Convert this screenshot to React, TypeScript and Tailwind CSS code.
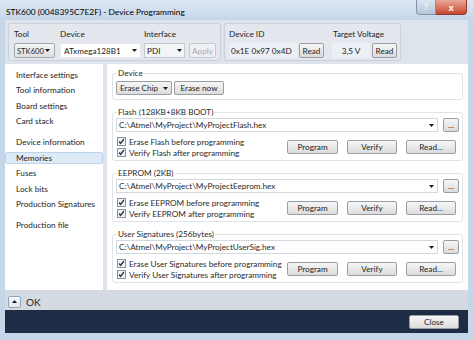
import React from 'react';

const navItems: { label: string; gap?: boolean; selected?: boolean }[] = [
  { label: 'Interface settings' },
  { label: 'Tool information' },
  { label: 'Board settings' },
  { label: 'Card stack' },
  { label: 'Device information', gap: true },
  { label: 'Memories', selected: true },
  { label: 'Fuses' },
  { label: 'Lock bits' },
  { label: 'Production Signatures' },
  { label: 'Production file', gap: true },
];

const memories = [
  {
    legend: 'Flash (128KB+8KB BOOT)',
    path: 'C:\\Atmel\\MyProject\\MyProjectFlash.hex',
    erase: 'Erase Flash before programming',
    verify: 'Verify Flash after programming',
  },
  {
    legend: 'EEPROM (2KB)',
    path: 'C:\\Atmel\\MyProject\\MyProjectEeprom.hex',
    erase: 'Erase EEPROM before programming',
    verify: 'Verify EEPROM after programming',
  },
  {
    legend: 'User Signatures (256bytes)',
    path: 'C:\\Atmel\\MyProject\\MyProjectUserSig.hex',
    erase: 'Erase User Signatures before programming',
    verify: 'Verify User Signatures after programming',
  },
];

function Arrow() {
  return (
    <svg width="5" height="3" viewBox="0 0 5 3" className="shrink-0">
      <path d="M0 0h5L2.5 3z" fill="#1a1a1a" />
    </svg>
  );
}

function Button({ label, className = '' }: { label: string; className?: string }) {
  return (
    <div
      className={`flex items-center justify-center rounded-[2px] border border-[#9a9ea4] bg-gradient-to-b from-[#f6f6f6] to-[#dcdcdc] text-[#1e1e1e] ${className}`}
    >
      {label}
    </div>
  );
}

function Checkbox({ label }: { label: string }) {
  return (
    <div className="flex h-[11px] items-center gap-[3px]">
      <svg width="9" height="9" viewBox="0 0 9 9" className="shrink-0">
        <rect x="0.5" y="0.5" width="8" height="8" fill="#f1f3f6" stroke="#8c939c" />
        <path d="M2 4.5l1.6 1.8L7 2" stroke="#2c3a5c" strokeWidth="1.4" fill="none" />
      </svg>
      <span>{label}</span>
    </div>
  );
}

export default function App() {
  return (
    <div className="flex h-[340px] w-[474px] flex-col whitespace-nowrap bg-[#c6d6e9] font-[Lato,sans-serif] text-[8.2px] leading-[10px] text-[#1e1e1e]">
      {/* Title bar */}
      <div className="flex h-[20px] shrink-0 items-start justify-between bg-gradient-to-b from-[#dbe7f4] to-[#c6d6e9] pr-[7px]">
        <div className="pl-[6px] pt-[7px] text-[8.4px] text-black">
          STK600 (0048395C7E2F) - Device Programming
        </div>
        <div className="flex">
          <div className="flex h-[15px] w-[20px] items-center justify-center rounded-bl-[4px] border border-t-0 border-[#8093ab] bg-gradient-to-b from-[#dbe5f0] to-[#b6c7db] text-[9px] font-bold text-[#f4f7fb]">
            ?
          </div>
          <div className="flex h-[15px] w-[31px] items-center justify-center rounded-br-[4px] border border-l-0 border-t-0 border-[#8c3b2e] bg-gradient-to-b from-[#e9a899] to-[#c4432e] text-[10px] font-bold text-white">
            x
          </div>
        </div>
      </div>

      {/* Client */}
      <div className="ml-[5px] mr-[6px] flex flex-1 flex-col bg-[#dee4eb]">
        {/* Toolbar */}
        <div className="flex h-[44px] shrink-0 gap-[3px] pl-[3px] pt-[3px]">
          <div className="flex h-[38px] w-[213px] gap-[5px] rounded-[3px] border border-[#c9d0d9] bg-[#e4e8ee] pl-[5px] pt-[5px]">
            <div className="flex flex-col gap-[4px]">
              <span className="h-[10px]">Tool</span>
              <div className="flex h-[15px] w-[41px] items-center justify-between rounded-[2px] border border-[#a3a8ae] bg-gradient-to-b from-[#f6f6f6] to-[#dedede] pl-[2px] pr-[4px] text-[7.6px]">
                STK600 <Arrow />
              </div>
            </div>
            <div className="flex flex-col gap-[4px]">
              <span className="h-[10px]">Device</span>
              <div className="flex h-[15px] w-[81px] items-center justify-between border border-[#e4e8ee] bg-white px-[3px]">
                ATxmega128B1 <Arrow />
              </div>
            </div>
            <div className="-ml-[2px] flex flex-col gap-[4px]">
              <span className="h-[10px]">Interface</span>
              <div className="flex h-[15px] w-[41px] items-center justify-between border border-[#c5cad1] bg-[#f3f4f6] px-[2px]">
                PDI <Arrow />
              </div>
            </div>
            <div className="-ml-[1px] flex flex-col gap-[4px]">
              <span className="h-[10px]" />
              <div className="flex h-[15px] w-[27px] items-center justify-center rounded-[2px] border border-[#c5cad1] bg-[#eef0f3] text-[#a6abb2]">
                Apply
              </div>
            </div>
          </div>

          <div className="flex h-[38px] w-[177px] gap-[3px] rounded-[3px] border border-[#c9d0d9] bg-[#e4e8ee] pl-[4px] pt-[5px]">
            <div className="flex flex-col gap-[4px]">
              <span className="h-[10px]">Device ID</span>
              <div className="flex items-center gap-[2px]">
                <div className="flex h-[15px] w-[68px] items-center bg-[#eceff3] px-[2px]">0x1E 0x97 0x4D</div>
                <Button label="Read" className="h-[15px] w-[25px]" />
              </div>
            </div>
            <div className="ml-[5px] flex flex-col gap-[4px]">
              <span className="h-[10px] pl-[1px]">Target Voltage</span>
              <div className="flex items-center gap-[2px]">
                <div className="flex h-[15px] w-[38px] items-center justify-center bg-[#eceff3]">3,5 V</div>
                <Button label="Read" className="h-[15px] w-[25px]" />
              </div>
            </div>
          </div>
        </div>

        {/* Main */}
        <div className="flex h-[226px] shrink-0 gap-[4px]">
          <div className="flex w-[98px] flex-col bg-white pt-[3px]">
            {navItems.map((item) => (
              <div key={item.label} className={`flex h-[15.5px] items-center ${item.gap ? 'mt-[5.5px]' : ''}`}>
                {item.selected ? (
                  <div className="flex h-[12px] w-full items-center rounded-[2px] border border-[#bcd3ee] bg-[#dfeaf7] pl-[10px]">
                    {item.label}
                  </div>
                ) : (
                  <span className="pl-[11px]">{item.label}</span>
                )}
              </div>
            ))}
          </div>

          <div className="flex flex-1 flex-col bg-white px-[5px] pt-[4px] text-[#2a2a2a]">
            <fieldset className="rounded-[3px] border border-[#dfe3e8] px-[3px] pb-[4px]">
              <legend className="ml-[1px] px-[1px] leading-[10px]">Device</legend>
              <div className="mt-[3px] flex gap-[2px]">
                <div className="flex h-[14px] w-[56px] items-center justify-between rounded-[2px] border border-[#9a9ea4] bg-gradient-to-b from-[#f6f6f6] to-[#dcdcdc] px-[3px]">
                  Erase Chip <Arrow />
                </div>
                <Button label="Erase now" className="h-[14px] w-[50px]" />
              </div>
            </fieldset>

            {memories.map((m) => (
              <fieldset key={m.legend} className="mt-[7px] rounded-[3px] border border-[#dfe3e8] px-[3px] pb-[2px]">
                <legend className="ml-[1px] px-[1px] leading-[10px]">{m.legend}</legend>
                <div className="mt-[1px] flex gap-[5px]">
                  <div className="flex h-[14px] flex-1 items-center justify-between border border-[#d3d8de] bg-white pl-[2px] pr-[3px]">
                    {m.path} <Arrow />
                  </div>
                  <Button label="..." className="h-[14px] w-[16px]" />
                </div>
                <div className="mt-[4px] flex h-[22px] items-center justify-between pr-[3px]">
                  <div className="flex flex-col pl-[1px]">
                    <Checkbox label={m.erase} />
                    <Checkbox label={m.verify} />
                  </div>
                  <div className="flex gap-[9px]">
                    <Button label="Program" className="h-[14px] w-[51px]" />
                    <Button label="Verify" className="h-[14px] w-[50px]" />
                    <Button label="Read..." className="h-[14px] w-[50px]" />
                  </div>
                </div>
              </fieldset>
            ))}
          </div>
        </div>

        {/* OK bar */}
        <div className="flex h-[20px] shrink-0 items-center gap-[5px] bg-[#d4dae2] pl-[3px] pt-[3px]">
          <div className="flex h-[12px] w-[13px] items-center justify-center rounded-[2px] border border-[#8fa3bb] bg-gradient-to-b from-[#f7f9fb] to-[#e1e7ee]">
            <svg width="5" height="3" viewBox="0 0 5 3">
              <path d="M0 3h5L2.5 0z" fill="#1a1a1a" />
            </svg>
          </div>
          <span className="text-[10px]">OK</span>
        </div>

        {/* Button bar */}
        <div className="flex h-[23px] shrink-0 items-center justify-end bg-[#1e2c46] pr-[9px] pt-[1px]">
          <Button label="Close" className="h-[14px] w-[50px]" />
        </div>
      </div>
      <div className="h-[7px] shrink-0" />
    </div>
  );
}
